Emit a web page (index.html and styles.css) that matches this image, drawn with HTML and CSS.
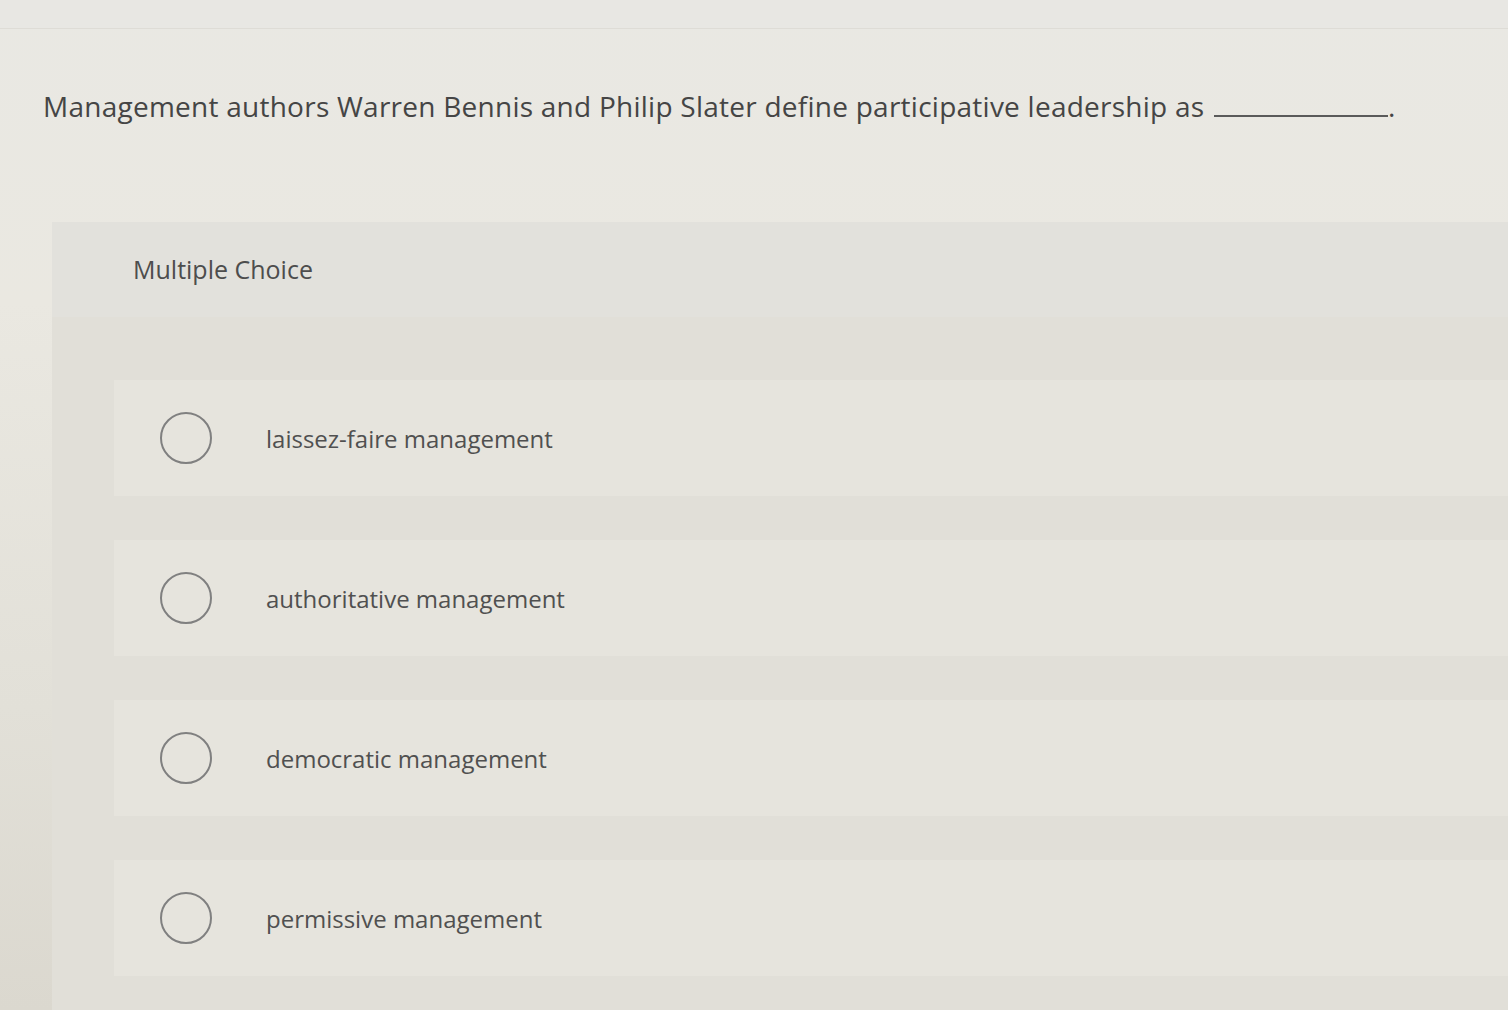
FILE: index.html
```html
<!DOCTYPE html>
<html>
<head>
<meta charset="utf-8">
<link rel="stylesheet" href="styles.css">
</head>
<body>
<div class="topbar"></div>
<p class="question">Management authors Warren Bennis and Philip Slater define participative leadership as <span class="blank"></span>.</p>
<section class="panel">
  <div class="panel-head">Multiple Choice</div>
  <div class="panel-body">
    <div class="option"><span class="radio"></span><span class="label">laissez-faire management</span></div>
    <div class="option"><span class="radio"></span><span class="label">authoritative management</span></div>
    <div class="option"><span class="radio"></span><span class="label">democratic management</span></div>
    <div class="option"><span class="radio"></span><span class="label">permissive management</span></div>
  </div>
</section>
</body>
</html>
```
FILE: styles.css
```css
html, body {
  margin: 0;
  padding: 0;
  height: 1010px;
  overflow: hidden;
}
body {
  font-family: "Open Sans", Lato, "Liberation Sans", sans-serif;
  background: linear-gradient(to bottom, #e9e8e3 0%, #eae8e1 30%, #e2e0d8 70%, #dbd8cf 100%);
  color: #4b4b4b;
}
.topbar {
  height: 28px;
  border-bottom: 1px solid #dedcd6;
  background: #e8e7e3;
}
.question {
  margin: 57px 0 0 43px;
  font-size: 28px;
  letter-spacing: 0.25px;
  line-height: 40px;
  color: #454545;
  white-space: nowrap;
}
.blank {
  display: inline-block;
  width: 174px;
  border-bottom: 2px solid #5a5a5a;
  vertical-align: baseline;
  margin-left: 2px;
}
.panel {
  margin: 96px 0 0 52px;
}
.panel-head {
  height: 95px;
  box-sizing: border-box;
  padding: 30px 0 0 81px;
  font-size: 25px;
  color: #4d4d4d;
  background: #e2e1dc;
}
.panel-body {
  box-sizing: border-box;
  height: 693px;
  padding: 63px 0 0 62px;
  display: flex;
  flex-direction: column;
  gap: 44px;
  background: #e1dfd8;
}
.option {
  height: 116px;
  display: flex;
  align-items: center;
  background: #e6e4dd;
  padding-left: 46px;
  flex: none;
}
.radio {
  width: 48px;
  height: 48px;
  border: 2px solid #808080;
  border-radius: 50%;
  flex: none;
}
.label {
  margin-left: 54px;
  font-size: 24px;
  color: #505050;
}
```
